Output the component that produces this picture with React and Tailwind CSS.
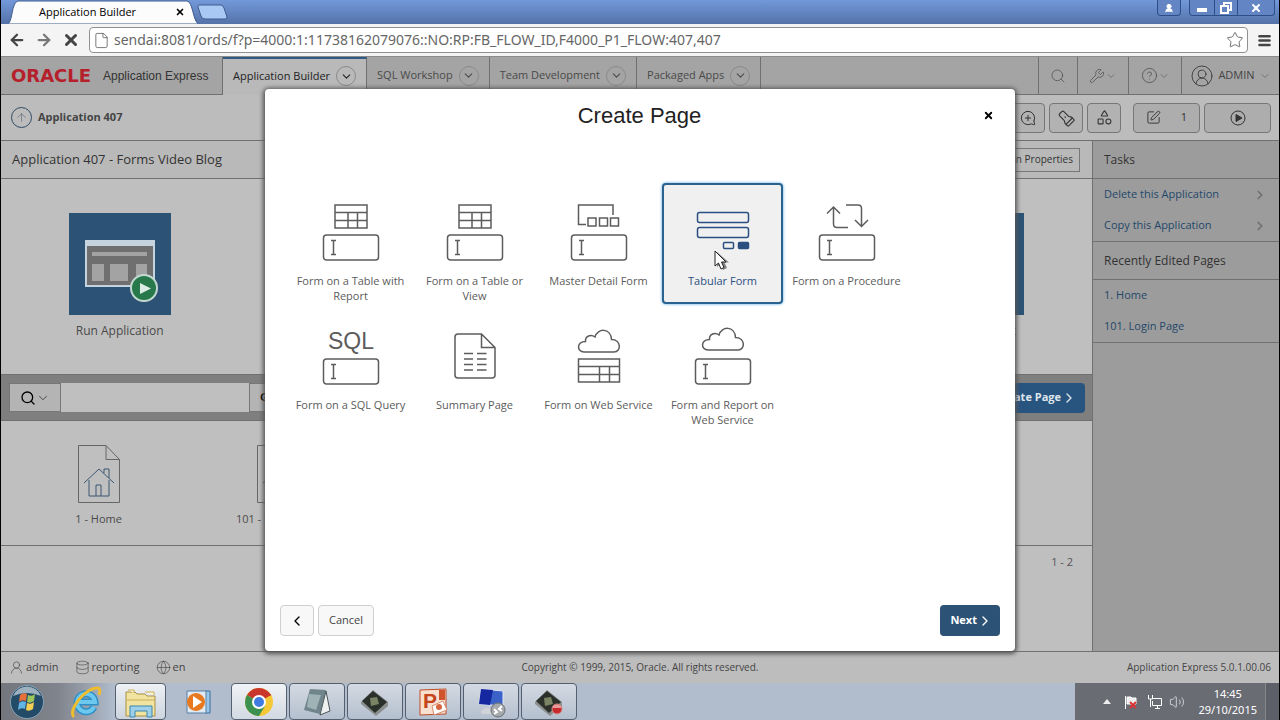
import { useState } from "react";
import {
  ArrowLeft,
  ArrowRight,
  ArrowUp,
  ChevronDown,
  ChevronLeft,
  ChevronRight,
  CirclePlay,
  CircleHelp,
  CircleUserRound,
  Database,
  File,
  Globe,
  Menu,
  MessageCirclePlus,
  Search,
  Shapes,
  SquarePen,
  Star,
  UserRound,
  Volume2,
  Flashlight,
  Wrench,
  X,
} from "lucide-react";

// Text field with an I-beam, shared by most of the form icons
function FieldShape() {
  return (
    <>
      <rect x="4.5" y="35" width="55" height="25" rx="3" />
      <path d="M12 40.5h5M12 54.5h5M14.5 40.5v14" />
    </>
  );
}

function CloudShape() {
  return (
    <path d="M17 26C9.500 26 9.500 15.500 18.500 15.500C18 10 24 8 28 11C30.500 1.500 44 2 44.500 13.500C54.500 13.500 54.500 26 47 26Z" />
  );
}

const TYPES = [
  {
    label: "Form on a Table with Report",
    icon: (
      <>
        <path d="M16 5h32v23H16zM16 12.500h32M16 20.500h32M29 12.500v15.500M38.500 12.500v15.500" />
        <FieldShape />
      </>
    ),
  },
  {
    label: "Form on a Table or View",
    icon: (
      <>
        <path d="M16 5h32v23H16zM16 12.500h32M16 20.500h32M29 12.500v15.500M38.500 12.500v15.500" />
        <FieldShape />
      </>
    ),
  },
  {
    label: "Master Detail Form",
    icon: (
      <>
        <path d="M19 24.500h-7.500V5H46v10M21 18h8v8h-8zM32.500 18h8v8h-8zM43.500 18h8v8h-8z" />
        <FieldShape />
      </>
    ),
  },
  {
    label: "Tabular Form",
    icon: (
      <>
        <rect x="6.500" y="12.500" width="51" height="10" rx="2" />
        <rect x="6.500" y="27.500" width="51" height="10" rx="2" />
        <rect x="32.500" y="42.500" width="10" height="6" rx="1" />
        <rect x="47.500" y="42.500" width="10" height="6" rx="1" fill="currentColor" />
      </>
    ),
  },
  {
    label: "Form on a Procedure",
    icon: (
      <>
        <path d="M12 13.500l6.500-6.500 6.500 6.500M18.500 7v17q0 3.500 3.500 3.500h11M31 5h12q3.500 0 3.500 3.500V26M40 20l6.500 6.500 6.500-6.500" />
        <FieldShape />
      </>
    ),
  },
  {
    label: "Form on a SQL Query",
    icon: (
      <>
        <text x="32" y="25" textAnchor="middle" fontSize="23" fontFamily="Liberation Sans, sans-serif" fill="currentColor" stroke="none">
          SQL
        </text>
        <FieldShape />
      </>
    ),
  },
  {
    label: "Summary Page",
    icon: (
      <path d="M38.500 10H15q-3 0-3 3v38q0 3 3 3h34q3 0 3-3V23.500zM38.500 10v13.500H52M21 29.500h9M34 29.500h9.500M21 35h9M34 35h9.500M21 40.500h9M34 40.500h9.500M21 46h9M34 46h9.500" />
    ),
  },
  {
    label: "Form on Web Service",
    icon: (
      <>
        <g transform="translate(0 2)">
          <CloudShape />
        </g>
        <path d="M11.500 35h41v23h-41zM11.500 42.500h41M11.500 50.500h41M32.500 42.500v15.500M42.500 42.500v15.500" />
      </>
    ),
  },
  {
    label: "Form and Report on Web Service",
    icon: (
      <>
        <CloudShape />
        <FieldShape />
      </>
    ),
  },
];

function BrowserChrome() {
  return (
    <header className="shrink-0 border-b border-[#8b8b8b] bg-[#f4f4f4]">
      <div className="flex h-6 items-start bg-gradient-to-b from-[#7399da] to-[#5472a8]">
        <div className="relative ml-2 flex h-6 w-[188px] items-center pl-[30px] pr-3">
          <svg className="absolute inset-0 h-6 w-full" viewBox="0 0 188 24" preserveAspectRatio="none">
            <path d="M-2 24C4 24 2 2 9 1H178C184 1 184 23 190 24Z" fill="#fcfcfc" stroke="#3f5c8f" />
          </svg>
          <span className="relative flex-1">Application Builder</span>
          <button aria-label="Close tab" className="relative">
            <X size={10} strokeWidth={4} />
          </button>
        </div>
        <svg className="mt-1" width="32" height="16">
          <path d="M2 1H24Q26 1 27 4L30 13Q30 15 28 15H8Q5 15 4 12L1 3Q1 1 2 1Z" fill="#a9c8f3" stroke="#3f5c8f" />
        </svg>
        <div className="ml-auto mr-1 flex items-start gap-2 text-white">
          <button aria-label="Profile" className="flex h-4 w-6 items-center justify-center rounded-b border border-t-0 border-[#2f4d86] bg-[#6385c4]">
            <UserRound size={10} fill="currentColor" />
          </button>
          <div className="flex h-4 rounded-b border border-t-0 border-[#2f4d86] bg-[#6385c4]">
            <button aria-label="Minimize" className="flex w-6 items-center justify-center pt-1">
              <span className="h-1 w-[10px] bg-white" />
            </button>
            <button aria-label="Restore" className="flex w-6 items-center justify-center border-x border-[#2f4d86]">
              <svg width="12" height="12" fill="none" stroke="currentColor" strokeWidth="2">
                <path d="M4 3V1h7v7H9M1 4h7v7H1z" />
              </svg>
            </button>
            <button aria-label="Close" className="flex w-9 items-center justify-center">
              <X size={12} strokeWidth={4} />
            </button>
          </div>
        </div>
      </div>
      <div className="flex h-8 items-center gap-[9px] px-[7px] text-[#444]">
        <button aria-label="Back"><ArrowLeft size={18} strokeWidth={3} /></button>
        <button aria-label="Forward" className="text-[#777]"><ArrowRight size={18} strokeWidth={3} /></button>
        <button aria-label="Stop"><X size={18} strokeWidth={4} /></button>
        <div className="flex h-[26px] flex-1 items-center gap-1 rounded-sm border border-[#909090] bg-white px-[3px]">
          <File size={17} strokeWidth={1} />
          <input
            aria-label="Address"
            defaultValue="sendai:8081/ords/f?p=4000:1:11738162079076::NO:RP:FB_FLOW_ID,F4000_P1_FLOW:407,407"
            className="min-w-0 flex-1 font-['Noto_Sans',sans-serif] text-sm text-[#666] outline-none"
          />
          <button aria-label="Bookmark"><Star size={18} strokeWidth={1} /></button>
        </div>
        <button aria-label="Menu"><Menu size={15} strokeWidth={4} /></button>
      </div>
    </header>
  );
}

function NavTab({ label, active }) {
  return (
    <button
      className={
        active
          ? "flex items-center gap-[6px] border-r border-t-2 border-r-[#707070] border-t-[#2d5b85] bg-[#b9b9b9] pb-[2px] pl-[10px] pr-[10px] text-[#222]"
          : "flex items-center gap-[6px] border-b border-r border-[#707070] pl-[10px] pr-[10px] text-[#4a4a4a]"
      }
    >
      {label}
      <span className="flex size-5 items-center justify-center rounded-full border border-[#8a8a8a]">
        <ChevronDown size={13} strokeWidth={2} />
      </span>
    </button>
  );
}

function AppHeader() {
  const cell = "flex items-center justify-center border-l border-[#707070]";
  return (
    <nav className="flex h-[38px] shrink-0 bg-[#a4a4a4]">
      <a href="#home" className="flex w-[222px] items-center border-b border-r border-[#707070] pl-[10px]">
        <span className="w-[92px] font-['DejaVu_Sans',sans-serif] text-lg font-bold text-[#b5202b]">ORACLE</span>
        <span className="whitespace-nowrap font-['Liberation_Sans',sans-serif] text-xs text-[#333]">Application Express</span>
      </a>
      <NavTab label="Application Builder" active />
      <NavTab label="SQL Workshop" />
      <NavTab label="Team Development" />
      <NavTab label="Packaged Apps" />
      <div className="ml-auto flex flex-1 justify-end border-b border-[#707070] text-[#444]">
        <button aria-label="Search" className={`${cell} w-[39px]`}><Search size={16} strokeWidth={1} /></button>
        <button aria-label="Administration" className={`${cell} w-[51px]`}>
          <Wrench size={16} strokeWidth={1} />
          <ChevronDown size={12} strokeWidth={1} />
        </button>
        <button aria-label="Help" className={`${cell} w-[53px]`}>
          <CircleHelp size={17} strokeWidth={1} />
          <ChevronDown size={12} strokeWidth={1} />
        </button>
        <button className={`${cell} w-[98px] gap-1`}>
          <CircleUserRound size={24} strokeWidth={1} />
          ADMIN
          <ChevronDown size={12} strokeWidth={1} />
        </button>
      </div>
    </nav>
  );
}

function ToolButton({ label, wide, children }) {
  return (
    <button
      aria-label={label}
      className={
        wide
          ? "flex h-[30px] w-[67px] items-center justify-center gap-5 rounded-sm border border-[#777] bg-[#adadad]"
          : "flex h-[30px] w-[34px] items-center justify-center rounded-sm border border-[#777] bg-[#b2b2b2]"
      }
    >
      {children}
    </button>
  );
}

function Breadcrumb() {
  return (
    <div className="flex h-[46px] shrink-0 items-center gap-1 border-b border-[#707070] bg-[#bcbcbc] pl-[10px] pr-2 text-[#333]">
      <span className="flex size-[21px] items-center justify-center rounded-full border border-[#2f4a63] text-[#456]">
        <ArrowUp size={13} strokeWidth={1} />
      </span>
      <span className="ml-[2px] mr-auto font-bold text-[#444]">Application 407</span>
      <ToolButton label="Feedback"><MessageCirclePlus size={16} strokeWidth={1.5} className="-scale-x-100" /></ToolButton>
      <ToolButton label="Find"><Flashlight size={18} strokeWidth={1.5} className="rotate-[135deg]" /></ToolButton>
      <ToolButton label="Shared components"><Shapes size={17} strokeWidth={1.5} /></ToolButton>
      <span className="w-1" />
      <ToolButton wide label="Edit page 1">
        <SquarePen size={15} strokeWidth={1.5} />1
      </ToolButton>
      <ToolButton wide label="Run page">
        <svg width="16" height="16" fill="none" stroke="currentColor">
          <circle cx="8" cy="8" r="7" />
          <path d="M6 4.500l6 3.500-6 3.500z" fill="currentColor" />
        </svg>
      </ToolButton>
    </div>
  );
}

function AppTile({ label }) {
  return (
    <a href="#tile" className="flex flex-col items-center gap-2 text-xs text-[#4a4a4a]">
      <svg width="102" height="102" viewBox="0 0 102 102">
        <rect width="102" height="102" fill="#2c5275" />
        <rect x="16" y="27" width="70" height="47" fill="#c4d3de" />
        <rect x="18" y="33" width="66" height="39" fill="#6f6f6f" />
        <path d="M23 39h55v4H23zM23 51h12v17H23zM41 51h18v17H41zM67 51h11v12H67z" fill="#a3a3a3" />
        <circle cx="75" cy="75" r="13" fill="#27794c" stroke="#c3d8cf" strokeWidth="2" />
        <path d="M71 70l11 5.500-11 5.500z" fill="#dcebe3" />
      </svg>
      {label}
    </a>
  );
}

function PageItem({ label }) {
  return (
    <a href="#page" className="flex flex-col items-center gap-2 text-[#4a4a4a]">
      <svg width="42" height="58" viewBox="0 0 42 58" fill="none" stroke="#666">
        <path d="M28 .5H.5v57h41V14.500zM28 .5v14h13.500" />
        <path d="M6 38l15-14 15 14M11 35v16h20V35M26 28v-4h5v9M18 51V40h5v11" stroke="#3b5672" />
      </svg>
      {label}
    </a>
  );
}

function MainColumn() {
  return (
    <main className="flex min-w-0 flex-1 flex-col bg-[#bfbfbf]">
      <div className="flex h-[38px] shrink-0 items-center justify-between border-b border-[#707070] bg-[#b9b9b9] pl-[11px] pr-3">
        <h1 className="text-[13px] text-[#333]">Application 407 - Forms Video Blog</h1>
        <button className="h-6 border border-[#777] px-[6px] text-[10px] text-[#333]">Edit Application Properties</button>
      </div>
      <div className="grid h-[195px] shrink-0 grid-cols-5 px-3 pt-[34px]">
        <AppTile label="Run Application" />
        <AppTile label="Supporting Objects" />
        <AppTile label="Shared Components" />
        <AppTile label="Utilities" />
        <AppTile label="Export / Import" />
      </div>
      <div className="flex h-[47px] shrink-0 items-center border-y border-[#707070] bg-[#7f7f7f] pl-2 pr-[7px]">
        <button aria-label="Search options" className="flex h-[29px] w-[52px] items-center justify-center border border-[#777] bg-[#b4b4b4]">
          <Search size={16} strokeWidth={2} />
          <ChevronDown size={14} strokeWidth={1} />
        </button>
        <input aria-label="Search pages" className="h-[29px] w-[188px] bg-[#bfbfbf] px-2 outline-none" />
        <button className="h-[29px] border border-[#777] bg-[#b4b4b4] px-[10px] font-bold">Go</button>
        <button className="ml-auto flex h-[30px] items-center rounded-sm bg-[#285480] pl-3 pr-2 font-bold text-[#dfe6ec]">
          Create Page <ChevronRight size={16} />
        </button>
      </div>
      <div className="grid h-[125px] shrink-0 grid-cols-6 border-b border-[#707070] px-2 pt-6">
        <PageItem label="1 - Home" />
        <PageItem label="101 - Login Page" />
      </div>
      <p className="pr-[19px] pt-2 text-right text-[#555]">1 - 2</p>
    </main>
  );
}

function SideRow({ children, arrow }) {
  return (
    <li className="flex h-[31px] items-center justify-between pl-[11px] pr-3">
      <a href="#side" className="text-[#24486a]">{children}</a>
      {arrow && <ChevronRight size={14} strokeWidth={3} className="text-[#707070]" />}
    </li>
  );
}

function SidePanel() {
  return (
    <aside className="w-[187px] shrink-0 border-l border-[#707070] bg-[#9c9c9c]">
      <h2 className="flex h-[38px] items-center border-b border-[#707070] pl-[11px] text-xs text-[#333]">Tasks</h2>
      <ul className="border-b border-[#707070]">
        <SideRow arrow>Delete this Application</SideRow>
        <SideRow arrow>Copy this Application</SideRow>
      </ul>
      <h2 className="flex h-[38px] items-center border-b border-[#707070] pl-[11px] text-xs text-[#333]">Recently Edited Pages</h2>
      <ul className="border-b border-[#707070]">
        <SideRow>1. Home</SideRow>
        <SideRow>101. Login Page</SideRow>
      </ul>
    </aside>
  );
}

function CreatePageDialog() {
  const [selected, setSelected] = useState("Tabular Form");
  return (
    <div role="dialog" aria-label="Create Page" className="relative flex h-[562px] w-[750px] flex-col rounded-sm bg-white shadow-[0_1px_4px_2px_#555]">
      <div className="flex h-[52px] shrink-0 items-center pr-[21px]">
        <h2 className="flex-1 pl-[31px] text-center font-['Liberation_Sans',sans-serif] text-[22px] text-[#222]">Create Page</h2>
        <button aria-label="Close dialog"><X size={11} strokeWidth={4} /></button>
      </div>
      <div className="mx-[25px] mt-[42px] grid grid-cols-[repeat(5,121px)] gap-[3px]">
        {TYPES.map((type) => (
          <button
            key={type.label}
            onClick={() => setSelected(type.label)}
            className={
              type.label === selected
                ? "flex h-[121px] flex-col items-center gap-[9px] rounded-sm border-2 border-[#2a6390] bg-[#f0f0f0] pt-[15px] leading-[15px] text-[#2b4f80] shadow-[0_0_3px_#4aa3dd]"
                : "flex h-[121px] flex-col items-center gap-[9px] rounded-sm border-2 border-transparent pt-[15px] leading-[15px] text-[#5c5c5c]"
            }
          >
            <svg className="shrink-0" width="64" height="64" viewBox="0 0 64 64" fill="none" stroke="currentColor" strokeWidth="1.5">
              {type.icon}
            </svg>
            <span className="w-[112px]">{type.label}</span>
          </button>
        ))}
      </div>
      {/* Mouse pointer resting on the selected tile */}
      <svg className="absolute left-[449px] top-[161px]" width="16" height="21" viewBox="0 0 16 21">
        <path d="M1 1v15l3.500-3 2.500 6 4-2-2.500-5.500H13z" fill="#555" opacity=".7" transform="translate(2 1)" />
        <path d="M1 1v15l3.500-3 2.500 6 3-1.500-2.500-5.500H12z" fill="#fff" stroke="#222" />
      </svg>
      <div className="mt-auto flex items-center gap-1 px-[15px] pb-[15px]">
        <button aria-label="Previous" className="flex h-[31px] w-[34px] items-center justify-center rounded-sm border border-[#cfcfcf] bg-[#f8f8f8]">
          <ChevronLeft size={16} />
        </button>
        <button className="h-[31px] rounded-sm border border-[#cfcfcf] bg-[#f8f8f8] px-[10px] text-[#444]">Cancel</button>
        <button className="ml-auto flex h-[31px] items-center rounded-sm bg-[#2c5275] pl-[10px] pr-[7px] font-bold text-white">
          Next <ChevronRight size={16} />
        </button>
      </div>
    </div>
  );
}

function Footer() {
  return (
    <footer className="grid h-8 shrink-0 grid-cols-3 items-center border-t border-[#707070] bg-[#bdbdbd] px-2 text-[10px] text-[#444]">
      <div className="flex items-center gap-4 text-[11px]">
        <span className="flex items-center gap-[2px]"><UserRound size={15} strokeWidth={1} />admin</span>
        <span className="flex items-center gap-[2px]"><Database size={15} strokeWidth={1} />reporting</span>
        <span className="flex items-center gap-[2px]"><Globe size={15} strokeWidth={1} />en</span>
      </div>
      <p className="text-center">Copyright © 1999, 2015, Oracle. All rights reserved.</p>
      <p className="text-right">Application Express 5.0.1.00.06</p>
    </footer>
  );
}

function TaskButton({ label, bright, children }) {
  return (
    <button
      aria-label={label}
      className={
        bright
          ? "flex h-[37px] w-14 items-center justify-center rounded-sm border border-[#54606f] bg-gradient-to-b from-[#f0f3f6] to-[#d3d9e2]"
          : "flex h-[37px] w-14 items-center justify-center rounded-sm border border-[#54606f] bg-gradient-to-b from-[#d4dae3] to-[#b4bfce]"
      }
    >
      <svg width="32" height="32" viewBox="0 0 32 32">{children}</svg>
    </button>
  );
}

function ChipShape() {
  return (
    <>
      <path d="M2 16L14 4l15 12v4L17 30 2 18z" fill="#8b8f8e" />
      <path d="M3 15L14 5l14 11-12 11z" fill="#2c302b" />
      <path d="M11 12l7-1 2 7-8 2z" fill="#7a8464" />
    </>
  );
}

function Taskbar() {
  return (
    <div className="flex h-[37px] shrink-0 items-center bg-[#b1bdcd]">
      <div className="flex h-full w-[114px] items-center bg-gradient-to-r from-[#73767d] via-[#80848c] to-[#b1bdcd] pl-2">
        <button aria-label="Start">
          <svg width="36" height="36" viewBox="0 0 36 36">
            <circle cx="18" cy="18" r="16.500" fill="#234b68" stroke="#86a3b5" />
            <path d="M4 12a15 15 0 0 1 28 0q-14-6-28 0z" fill="#d2dde4" opacity=".7" />
            <path d="M11 11q4-3 7-1l-1 7q-4-2-7 1z" fill="#e8703a" />
            <path d="M19 11q4 2 7-1l-1 7q-4 3-7 1z" fill="#9cc55b" />
            <path d="M10 19q3-3 7-1l-1 7q-4-2-7 1z" fill="#63b4e6" />
            <path d="M18 19q4 2 7-1l-1 7q-4 3-7 1z" fill="#f5cf53" />
          </svg>
        </button>
        <button aria-label="Internet Explorer" className="ml-6">
          <svg width="34" height="36" viewBox="0 0 34 36" fill="none">
            <path d="M25 23a9 9 0 1 1 1-5H9" stroke="#2f8fc6" strokeWidth="7" />
            <path d="M25 23a9 9 0 1 1 1-5H9" stroke="#6cc8ee" strokeWidth="4" />
            <path d="M5 33C-2 26 18 2 29 4q3 1 1 7" stroke="#eebd2f" strokeWidth="3" />
          </svg>
        </button>
      </div>
      <div className="flex h-full flex-1 items-center gap-[2px]">
        <button aria-label="File Explorer" className="flex h-[37px] w-[51px] items-center justify-center rounded-sm border border-[#54606f] bg-gradient-to-b from-[#eef1f5] to-[#ccd4de]">
          <svg width="32" height="32" viewBox="0 0 32 32">
            <path d="M1 6h9l2 2h8l2 2h8v20H1z" fill="#f1e3a0" stroke="#a98f43" />
            <path d="M2 14h28M3 4h6v3M20 6h9v3" stroke="#c9ae57" fill="#fff6cf" />
            <path d="M5 31V20h22v11h-5v-6H10v6z" fill="#9ed0ea" stroke="#3c87ad" />
          </svg>
        </button>
        <button aria-label="Media Player" className="flex w-[61px] items-center justify-center">
          <svg width="32" height="32" viewBox="0 0 32 32">
            <path d="M22 5h5v22h-5z" fill="#9cc6e6" stroke="#386f9e" />
            <path d="M4 5h19v22H4z" fill="#e1eaf2" stroke="#527fa5" />
            <circle cx="13" cy="16" r="9" fill="#e8791e" />
            <path d="M10 10l9 6-9 6z" fill="#fff" />
          </svg>
        </button>
        <TaskButton label="Chrome" bright>
          <circle cx="16" cy="16" r="14" fill="#f4c836" />
          <path d="M16 16L3.900 9A14 14 0 0 1 28.100 9z" fill="#c9362c" />
          <path d="M16 16L3.900 9A14 14 0 0 0 16 30l6-10z" fill="#3c9150" />
          <path d="M16 9h12.100" stroke="#c9362c" />
          <circle cx="16" cy="16" r="7" fill="#fff" />
          <circle cx="16" cy="16" r="5" fill="#3f7be0" />
        </TaskButton>
        <TaskButton label="Notes">
          <path d="M9 3l16 1-6 24-16-4z" fill="#6f858b" />
          <path d="M8 8l12 1-5 15-9-3z" fill="#9fb3b6" />
          <path d="M25 5l4 20-10 4z" fill="#edf1f0" stroke="#4b5557" />
        </TaskButton>
        <TaskButton label="SQL Developer"><ChipShape /></TaskButton>
        <TaskButton label="PowerPoint">
          <path d="M3 4l26-1v25L3 29z" fill="#f8e0d0" stroke="#bf4a24" />
          <path d="M22 4h6v10h-6z" fill="#cf532b" />
          <text x="6" y="22" fontSize="21" fontWeight="700" fontFamily="Liberation Sans, sans-serif" fill="#c4441b">P</text>
          <path d="M15 20l11-5 4 9-13 5z" fill="#fff" stroke="#d98b6c" />
          <circle cx="22" cy="21" r="3" fill="#d5653e" />
        </TaskButton>
        <TaskButton label="Remote Desktop">
          <path d="M6 3l22 2v15L4 18z" fill="#3a62c8" stroke="#dfe6f2" />
          <path d="M6 3l12 1-3 15-11-1z" fill="#1628a0" />
          <path d="M6 25q6-6 12-1v4H7z" fill="#d0d4d8" />
          <circle cx="23" cy="24" r="7" fill="#a5a9ab" stroke="#6d7276" />
          <path d="M19 23l3 3-3 2M27 20l-3 3 3 2" stroke="#fff" strokeWidth="2" fill="none" />
        </TaskButton>
        <TaskButton label="Recorder">
          <ChipShape />
          <circle cx="24" cy="23" r="5" fill="#c62a2a" stroke="#d98d8d" />
          <path d="M20 20q4-3 8 0v2h-8z" fill="#e79a9a" />
        </TaskButton>
      </div>
      <div className="flex h-full w-[204px] items-center bg-[#696c73] text-white">
        <button aria-label="Show hidden icons" className="ml-7">
          <svg width="8" height="5"><path d="M4 0l4 5H0z" fill="#eee" /></svg>
        </button>
        <svg className="ml-3" width="16" height="16" fill="none" stroke="#fff">
          <path d="M2.500 2v13" />
          <path d="M4 3h4l1 1h4v6H4z" fill="#eee" />
          <path d="M7 8l6 6M13 8l-6 6" stroke="#d33" strokeWidth="2" />
        </svg>
        <svg className="ml-2" width="16" height="16" fill="none" stroke="#fff">
          <path d="M6 4.500h8.500v7H5.500V7M8 14.500h5M10.500 12v2M1.500 1v4h4V1M3.500 5v8" />
        </svg>
        <Volume2 className="ml-[6px]" size={16} strokeWidth={1} />
        <p className="ml-auto mr-2 text-center font-['Noto_Sans',sans-serif] text-[11px] leading-4">
          14:45
          <br />
          29/10/2015
        </p>
        <span className="h-full w-[14px] border-l border-[#888] bg-[#5d6068]" />
      </div>
    </div>
  );
}

export default function App() {
  return (
    <div className="flex h-screen flex-col overflow-hidden border-x border-black bg-[#bfbfbf] font-['Open_Sans',sans-serif] text-[11px]">
      <BrowserChrome />
      <div className="relative flex min-h-0 flex-1 flex-col">
        <AppHeader />
        <Breadcrumb />
        <div className="flex min-h-0 flex-1">
          <MainColumn />
          <SidePanel />
        </div>
        <Footer />
        <div className="absolute inset-0 flex items-center justify-center">
          <CreatePageDialog />
        </div>
      </div>
      <Taskbar />
    </div>
  );
}
